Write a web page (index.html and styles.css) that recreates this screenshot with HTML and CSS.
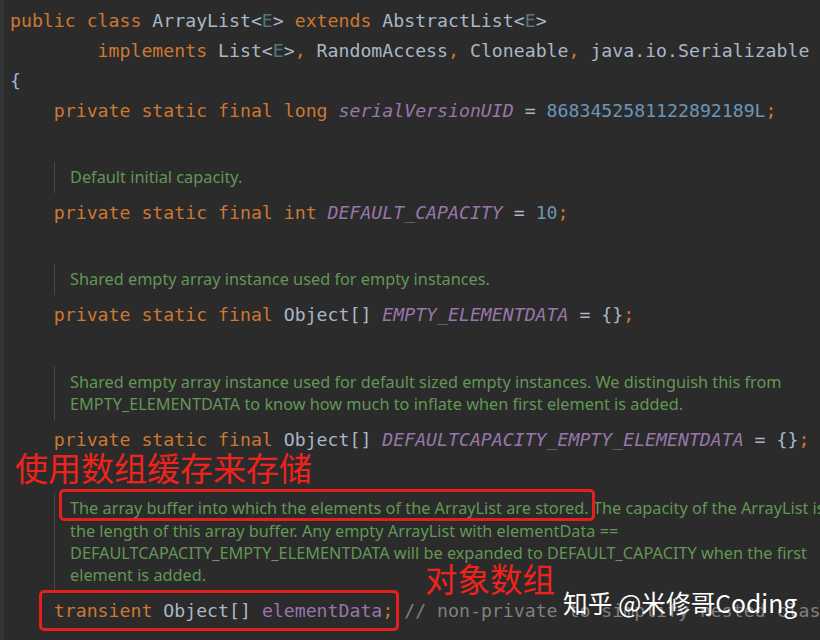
FILE: index.html
```html
<!DOCTYPE html>
<html lang="zh">
<head>
<meta charset="utf-8">
<title>ArrayList</title>
<link rel="stylesheet" href="styles.css">
</head>
<body>
<div class="page">
  <div class="editor">
    <div class="line"><span class="kw">public class</span> ArrayList&lt;<span class="tp">E</span>&gt; <span class="kw">extends</span> AbstractList&lt;<span class="tp">E</span>&gt;</div>
    <div class="line">        <span class="kw">implements</span> List&lt;<span class="tp">E</span>&gt;<span class="kw">,</span> RandomAccess<span class="kw">,</span> Cloneable<span class="kw">,</span> java.io.Serializable</div>
    <div class="line">{</div>
    <div class="line">    <span class="kw">private static final long</span> <span class="fd">serialVersionUID</span> = <span class="num">8683452581122892189L</span><span class="kw">;</span></div>

    <div class="doc">Default initial capacity.</div>
    <div class="line">    <span class="kw">private static final int</span> <span class="fd">DEFAULT_CAPACITY</span> = <span class="num">10</span><span class="kw">;</span></div>

    <div class="doc">Shared empty array instance used for empty instances.</div>
    <div class="line">    <span class="kw">private static final</span> Object[] <span class="fd">EMPTY_ELEMENTDATA</span> = {}<span class="kw">;</span></div>

    <div class="doc">Shared empty array instance used for default sized empty instances. We distinguish this from
EMPTY_ELEMENTDATA to know how much to inflate when first element is added.</div>
    <div class="line">    <span class="kw">private static final</span> Object[] <span class="fd">DEFAULTCAPACITY_EMPTY_ELEMENTDATA</span> = {}<span class="kw">;</span></div>

    <div class="doc doc-last">The array buffer into which the elements of the ArrayList are stored. The capacity of the ArrayList is
the length of this array buffer. Any empty ArrayList with elementData ==
DEFAULTCAPACITY_EMPTY_ELEMENTDATA will be expanded to DEFAULT_CAPACITY when the first
element is added.</div>
    <div class="line">    <span class="kw">transient</span> Object[] <span class="ins">elementData</span><span class="kw">;</span> <span class="cm">// non-private to simplify nested class access</span></div>
  </div>

  <div class="label label-store">使用数组缓存来存储</div>
  <div class="mark mark-buffer"></div>
  <div class="mark mark-field"></div>
  <div class="label label-obj">对象数组</div>
  <div class="watermark">知乎 @米修哥Coding</div>
</div>
</body>
</html>
```

FILE: styles.css
```css
html, body {
  margin: 0;
  padding: 0;
  background: #2b2b2b;
}

.page {
  position: relative;
  width: 820px;
  height: 640px;
  overflow: hidden;
  background: #2b2b2b;
}

.editor {
  height: 640px;
  box-sizing: border-box;
  border-left: 4px solid #323436;
  padding: 5.5px 0 0 6px;
  font-family: "DejaVu Sans Mono", "Liberation Mono", monospace;
  font-size: 18.2px;
  color: #a9b7c6;
  overflow: hidden;
}

.line {
  height: 30px;
  line-height: 30px;
  white-space: pre;
}

.kw { color: #cc7832; }
.tp { color: #507874; }
.fd { color: #9876aa; font-style: italic; }
.ins { color: #9876aa; }
.num { color: #6897bb; }
.cm { color: #808080; }

.doc {
  margin: 36px 0 5px 44px;
  border-left: 1px solid #474a4b;
  padding: 4.5px 0 4.5px 15px;
  font-family: "Noto Sans", "Open Sans", sans-serif;
  font-size: 16.3px;
  line-height: 22.4px;
  color: #629755;
  white-space: pre;
}

.doc-last {
  margin-top: 37.5px;
}

.label {
  position: absolute;
  font-family: "Noto Sans CJK SC", "Noto Sans", sans-serif;
  color: #f0231c;
  line-height: 1;
  white-space: nowrap;
}

.label-store {
  left: 15px;
  top: 451px;
  font-size: 33px;
}

.label-obj {
  left: 425px;
  top: 562px;
  font-size: 32.5px;
}

.mark {
  position: absolute;
  border: 3px solid #e3201b;
  border-radius: 5px;
  box-sizing: border-box;
}

.mark-buffer {
  left: 59px;
  top: 489px;
  width: 536px;
  height: 32px;
}

.mark-field {
  left: 39px;
  top: 590px;
  width: 360px;
  height: 41px;
}

.watermark {
  position: absolute;
  left: 563px;
  top: 590px;
  font-family: "Noto Sans CJK SC", "Noto Sans", sans-serif;
  font-size: 24.7px;
  line-height: 1;
  color: #ffffff;
  white-space: nowrap;
}
```
